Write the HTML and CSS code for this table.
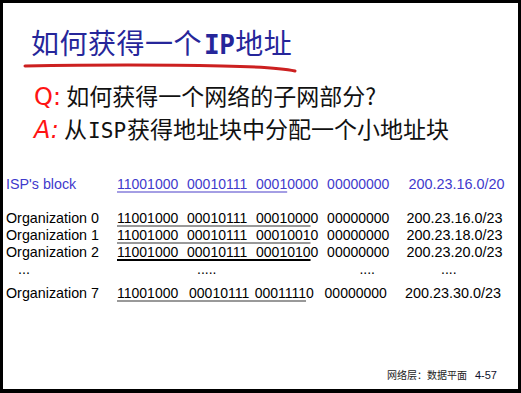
FILE: index.html
```html
<!DOCTYPE html>
<html lang="zh">
<head>
<meta charset="utf-8">
<link rel="stylesheet" href="styles.css">
</head>
<body>
<div class="slide">
  <h1 class="title">如何获得一个<span class="mono-t">IP</span>地址</h1>
  <svg class="swash" width="300" height="12" viewBox="0 0 300 12">
    <path d="M3,4 Q110,2 200,4 Q255,5 273,9" fill="none" stroke="#cc2020" stroke-width="3" stroke-linecap="round"/>
  </svg>
  <p class="qa"><span class="tag">Q:</span> 如何获得一个网络的子网部分?</p>
  <p class="qa"><span class="tag tag-a">A:</span> 从<span class="mono-a">ISP</span>获得地址块中分配一个小地址块</p>

  <div class="table">
    <div class="row isp">
      <span class="lab">ISP's block</span>
      <span class="bits"><span class="pfx pfx-isp">11001000  00010111  0001</span>0000  00000000</span>
      <span class="addr">200.23.16.0/20</span>
    </div>
    <div class="row org first">
      <span class="lab">Organization 0</span>
      <span class="bits"><span class="pfx pfx-gray">11001000  00010111  0001000</span>0  00000000</span>
      <span class="addr addr-l">200.23.16.0/23</span>
    </div>
    <div class="row org">
      <span class="lab">Organization 1</span>
      <span class="bits"><span class="pfx pfx-gray">11001000  00010111  0001001</span>0  00000000</span>
      <span class="addr addr-l">200.23.18.0/23</span>
    </div>
    <div class="row org">
      <span class="lab">Organization 2</span>
      <span class="bits"><span class="pfx pfx-black">11001000  00010111  0001010</span>0  00000000</span>
      <span class="addr addr-l">200.23.20.0/23</span>
    </div>
    <div class="row dots">
      <span class="lab lab-dots">...</span>
      <span class="d1">.....</span>
      <span class="d2">....</span>
      <span class="d3">....</span>
    </div>
    <div class="row org last">
      <span class="lab">Organization 7</span>
      <span class="bits bits-7"><span class="pfx pfx-gray">11001000  00010111 0001111</span>0  00000000</span>
      <span class="addr addr-7">200.23.30.0/23</span>
    </div>
  </div>

  <div class="footer"><span class="f-cn">网络层：数据平面</span><span class="f-num">4-57</span></div>
</div>
</body>
</html>
```

FILE: styles.css
```css
html, body {
  margin: 0;
  padding: 0;
  background: #fff;
}

.slide {
  box-sizing: border-box;
  width: 521px;
  height: 393px;
  border: 3px solid #000;
  border-bottom-width: 4px;
  display: flex;
  flex-direction: column;
  padding-top: 22px;
  font-family: "Noto Sans CJK SC", "DejaVu Sans", sans-serif;
  overflow: hidden;
}

.title {
  margin: 0 0 0 28px;
  font-size: 28px;
  font-weight: normal;
  line-height: 34px;
  letter-spacing: 0.5px;
  color: #26269a;
  white-space: nowrap;
}

.mono-t {
  font-family: "DejaVu Sans Mono", monospace;
  font-weight: bold;
  font-size: 26px;
  letter-spacing: -0.5px;
  margin: 0 1px 0 2px;
}

.swash {
  display: block;
  margin: 0 0 0 19px;
}

.qa {
  margin: 0 0 0 31px;
  font-size: 23px;
  line-height: 31px;
  color: #111;
  white-space: nowrap;
}

.qa:first-of-type {
  margin-top: 6px;
}

.tag {
  font-family: "DejaVu Sans", sans-serif;
  font-size: 24px;
  color: #ff1414;
}

.tag-a {
  font-style: italic;
}

.mono-a {
  font-family: "DejaVu Sans Mono", monospace;
  font-size: 21px;
  margin: 0 1px;
}

.table {
  margin-top: 29px;
  margin-left: 3px;
  font-family: "Liberation Sans", Arial, sans-serif;
  font-size: 14px;
  line-height: 17px;
  color: #000;
}

.row {
  display: flex;
  white-space: pre;
}

.row.first {
  margin-top: 16.5px;
}

.row.last {
  margin-top: 7px;
}

.lab {
  width: 111px;
  flex: none;
  font-size: 14.3px;
}

.lab-dots {
  padding-left: 12px;
  box-sizing: border-box;
}

.bits {
  word-spacing: 0.5px;
}

.bits-7 {
  word-spacing: 1.5px;
}

.pfx {
  text-decoration: underline;
  text-decoration-thickness: 1.5px;
  text-underline-offset: 2px;
}

.pfx-isp {
  text-decoration-color: #a49ee4;
}

.pfx-gray {
  text-decoration-color: #999;
}

.pfx-black {
  text-decoration-color: #000;
}

.isp {
  color: #3f3acc;
}

.addr {
  margin-left: 19px;
  font-size: 14.4px;
}

.addr-l {
  margin-left: 17px;
}

.addr-7 {
  margin-left: 18px;
}

.d1 {
  margin-left: 80px;
}

.d2 {
  margin-left: 143px;
}

.d3 {
  margin-left: 66px;
}

.footer {
  margin-top: auto;
  margin-bottom: 7px;
  padding-right: 21px;
  display: flex;
  justify-content: flex-end;
  align-items: baseline;
  line-height: 14px;
}

.f-cn {
  font-size: 10px;
  color: #222;
}

.f-num {
  font-family: "Liberation Sans", Arial, sans-serif;
  font-size: 11px;
  color: #10102a;
  margin-left: 8px;
}
```
